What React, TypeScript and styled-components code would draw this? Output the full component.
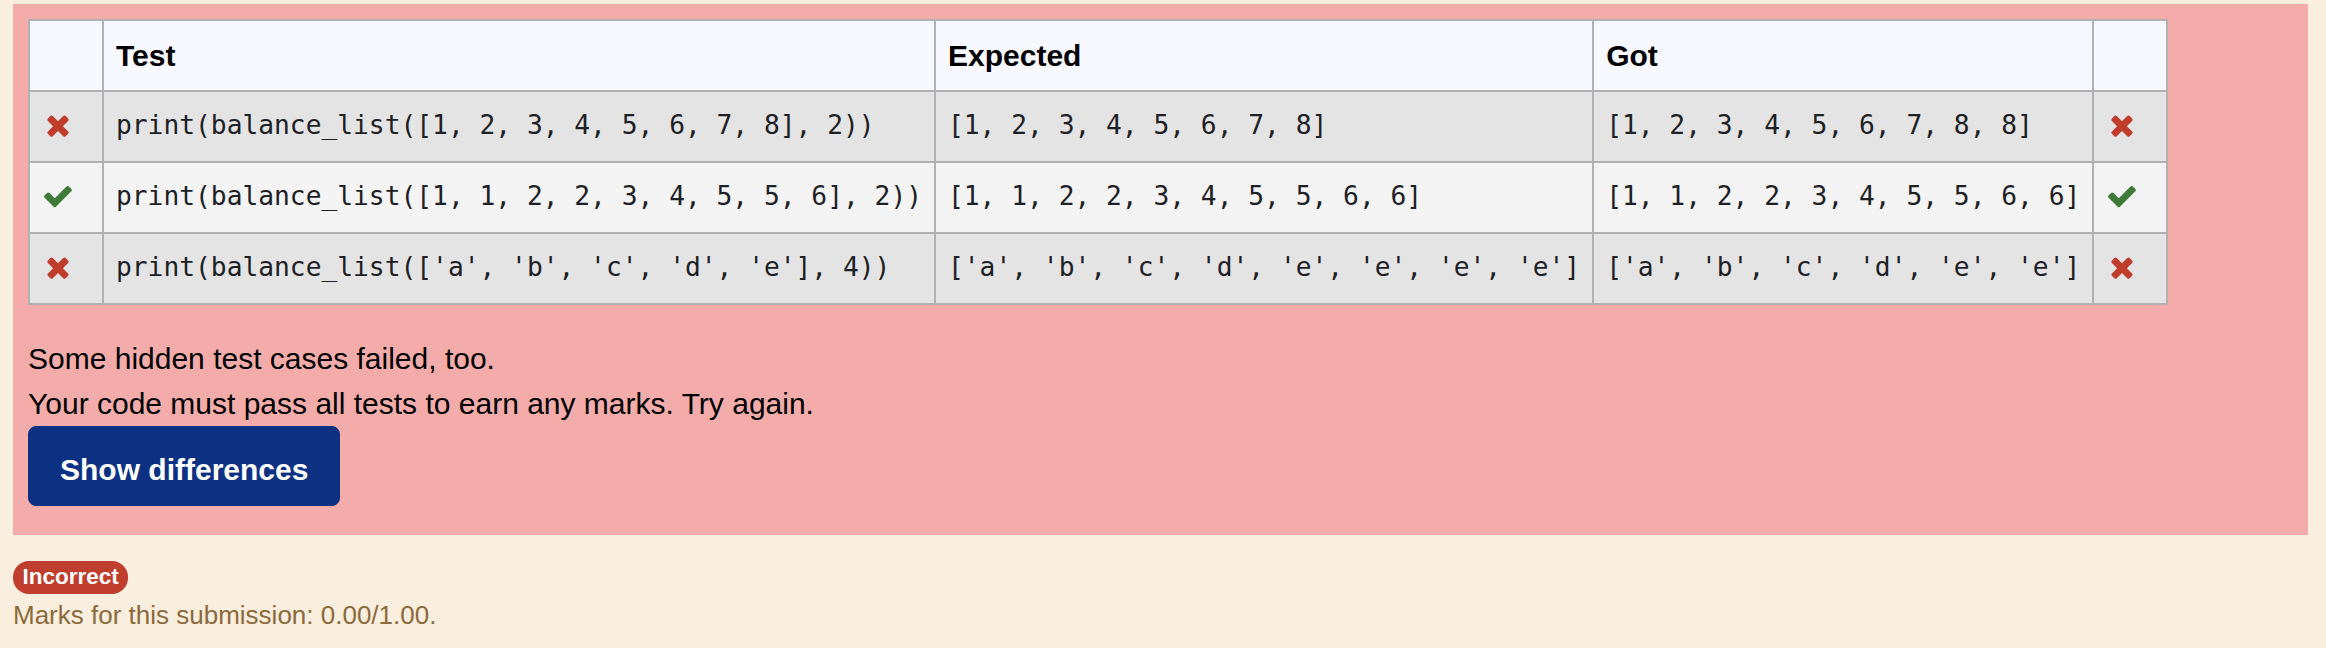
import React from "react";
import styled, { createGlobalStyle } from "styled-components";

const GlobalStyle = createGlobalStyle`
  html, body {
    margin: 0;
    padding: 0;
    background: #faeedf;
  }
  body {
    font-family: "Liberation Sans", Arial, sans-serif;
    font-size: 30px;
    line-height: 45px;
    color: #000;
  }
`;

const Page = styled.div`
  padding: 4px 18px 0 13px;
`;

const FeedbackBox = styled.div`
  background: #f3acaa;
  padding: 15px;
`;

const ResultsTable = styled.table`
  border-collapse: collapse;
  border: 2px solid #b1b1b1;
  margin-bottom: 31px;
`;

const HeadRow = styled.tr`
  background: #f8f8ff;
`;

const HeadCell = styled.th`
  border: 2px solid #b1b1b1;
  padding: 12px;
  text-align: left;
  font-weight: bold;
  vertical-align: top;
  color: #000;
`;

const Row = styled.tr<{ $shade: "odd" | "even" }>`
  background: ${(p) => (p.$shade === "odd" ? "#e4e4e4" : "#f4f4f4")};
`;

const IconCell = styled.td`
  border: 2px solid #b1b1b1;
  padding: 12px;
  vertical-align: top;
`;

const CodeCell = styled.td`
  border: 2px solid #b1b1b1;
  padding: 12px;
  vertical-align: top;
  font-family: "DejaVu Sans Mono", "Liberation Mono", monospace;
  font-size: 26.25px;
  line-height: 42px;
  white-space: pre;
  color: #1d2125;
`;

const IconSvg = styled.svg<{ $tone: "bad" | "good" }>`
  display: block;
  width: 32px;
  height: 32px;
  margin: 5px 16px 8px 0;
  fill: ${(p) => (p.$tone === "bad" ? "#c03d2c" : "#3f7a39")};
`;

const Line = styled.div`
  font-size: 30px;
  line-height: 45px;
  color: #000;
`;

const DiffButton = styled.button`
  display: block;
  font-family: "Liberation Sans", Arial, sans-serif;
  font-size: 30px;
  font-weight: bold;
  line-height: 45px;
  color: #fff;
  background: #0c3182;
  border: 1px solid #0c3182;
  border-radius: 8px;
  padding: 20px 31px 13px;
  margin: 0 0 14px 0;
  cursor: pointer;
`;

const Outcome = styled.div`
  display: flex;
  flex-direction: column;
  align-items: flex-start;
  padding-top: 26px;
`;

const Badge = styled.span`
  display: block;
  background: #bf3e2d;
  color: #fff;
  font-weight: bold;
  font-size: 22.5px;
  line-height: 22.5px;
  padding: 5px 9.5px;
  border-radius: 16px;
`;

const Marks = styled.div`
  margin-top: 2px;
  font-size: 26px;
  line-height: 39px;
  color: #8b6a3b;
`;

const CROSS =
  "M1490 1322q0 40-28 68l-136 136q-28 28-68 28t-68-28l-294-294-294 294q-28 28-68 28t-68-28l-136-136q-28-28-28-68t28-68l294-294-294-294q-28-28-28-68t28-68l136-136q28-28 68-28t68 28l294 294 294-294q28-28 68-28t68 28l136 136q28 28 28 68t-28 68l-294 294 294 294q28 28 28 68z";
const CHECK =
  "M1671 566q0 40-28 68l-724 724-136 136q-28 28-68 28t-68-28l-136-136-362-362q-28-28-28-68t28-68l136-136q28-28 68-28t68 28l294 295 656-657q28-28 68-28t68 28l136 136q28 28 28 68z";

const ResultIcon: React.FC<{ ok: boolean }> = ({ ok }) => (
  <IconSvg $tone={ok ? "good" : "bad"} viewBox="0 0 1792 1792" aria-label={ok ? "Correct" : "Incorrect"}>
    <path d={ok ? CHECK : CROSS} />
  </IconSvg>
);

type Result = { test: string; expected: string; got: string; ok: boolean };

const results: Result[] = [
  {
    test: "print(balance_list([1, 2, 3, 4, 5, 6, 7, 8], 2))",
    expected: "[1, 2, 3, 4, 5, 6, 7, 8]",
    got: "[1, 2, 3, 4, 5, 6, 7, 8, 8]",
    ok: false,
  },
  {
    test: "print(balance_list([1, 1, 2, 2, 3, 4, 5, 5, 6], 2))",
    expected: "[1, 1, 2, 2, 3, 4, 5, 5, 6, 6]",
    got: "[1, 1, 2, 2, 3, 4, 5, 5, 6, 6]",
    ok: true,
  },
  {
    test: "print(balance_list(['a', 'b', 'c', 'd', 'e'], 4))",
    expected: "['a', 'b', 'c', 'd', 'e', 'e', 'e', 'e']",
    got: "['a', 'b', 'c', 'd', 'e', 'e']",
    ok: false,
  },
];

export default function App() {
  return (
    <>
      <GlobalStyle />
      <Page>
        <FeedbackBox>
          <ResultsTable>
            <thead>
              <HeadRow>
                <HeadCell></HeadCell>
                <HeadCell>Test</HeadCell>
                <HeadCell>Expected</HeadCell>
                <HeadCell>Got</HeadCell>
                <HeadCell></HeadCell>
              </HeadRow>
            </thead>
            <tbody>
              {results.map((r, i) => (
                <Row key={i} $shade={i % 2 === 0 ? "odd" : "even"}>
                  <IconCell>
                    <ResultIcon ok={r.ok} />
                  </IconCell>
                  <CodeCell>{r.test}</CodeCell>
                  <CodeCell>{r.expected}</CodeCell>
                  <CodeCell>{r.got}</CodeCell>
                  <IconCell>
                    <ResultIcon ok={r.ok} />
                  </IconCell>
                </Row>
              ))}
            </tbody>
          </ResultsTable>
          <Line>Some hidden test cases failed, too.</Line>
          <Line>Your code must pass all tests to earn any marks. Try again.</Line>
          <DiffButton type="button">Show differences</DiffButton>
        </FeedbackBox>
        <Outcome>
          <Badge>Incorrect</Badge>
          <Marks>Marks for this submission: 0.00/1.00.</Marks>
        </Outcome>
      </Page>
    </>
  );
}
